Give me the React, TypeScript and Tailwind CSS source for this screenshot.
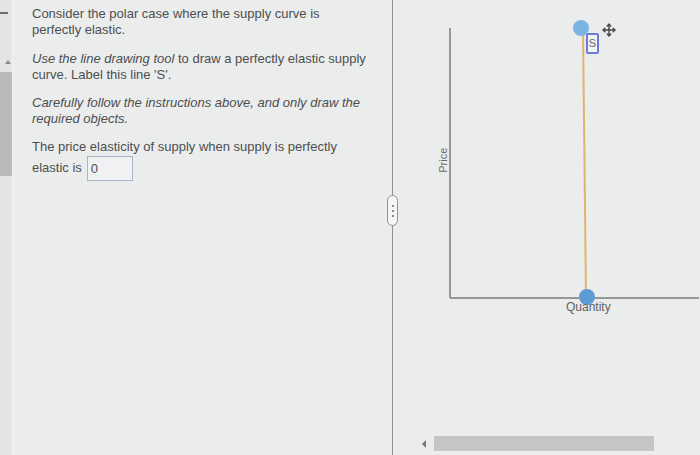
import { Move } from "lucide-react";

function LeftScrollbar() {
  return (
    <div className="relative w-[13px] shrink-0 bg-[#e2e4e5] border-r border-[#f3f4f4]">
      <div className="absolute left-0 top-[12px] h-[2px] w-[8px] bg-[#6b6d6e]" />
      <div className="absolute left-[5px] top-[60px] h-0 w-0 border-x-[3px] border-b-[4px] border-x-transparent border-b-[#8a8c8d]" />
      <div className="absolute left-0 top-[72px] h-[104px] w-[12px] bg-[#b8babb]" />
    </div>
  );
}

function Question() {
  return (
    <div className="w-[379px] shrink-0 pl-[19px] pt-[6px] text-[13px] leading-[15.5px] text-[#4d4f50] font-['Liberation_Sans',Arial,sans-serif]">
      <p>
        Consider the polar case where the supply curve is
        <br />
        perfectly elastic.
      </p>
      <p className="mt-[14px]">
        <i>Use the line drawing tool</i> to draw a perfectly elastic supply
        <br />
        curve. Label this line 'S'.
      </p>
      <p className="mt-[13px] italic">
        Carefully follow the instructions above, and only draw the
        <br />
        required objects.
      </p>
      <p className="mt-[13px]">The price elasticity of supply when supply is perfectly</p>
      <div className="mt-px flex items-center gap-[5px]">
        <span>elastic is</span>
        <div className="h-[25px] w-[46px] border border-[#a7b6c6] bg-[#eff1f2] pl-[3px] leading-[23px] text-[#4d4f50]">
          0
        </div>
      </div>
    </div>
  );
}

function Graph() {
  return (
    <div className="relative flex-1 font-['Liberation_Sans',Arial,sans-serif]">
      <svg className="absolute inset-0" width="306" height="455" viewBox="0 0 306 455">
        <line x1="57" y1="28" x2="57" y2="298" stroke="#7a7c7d" strokeWidth="1.5" />
        <line x1="57" y1="298" x2="306" y2="298" stroke="#7a7c7d" strokeWidth="1.5" />
        <line x1="190" y1="30" x2="193" y2="297" stroke="#e2b36e" strokeWidth="2" />
        <circle cx="188" cy="28" r="8" fill="#79b4e2" />
        <circle cx="194" cy="297" r="8" fill="#5d9bd6" />
      </svg>
      <div className="absolute left-[193px] top-[33px] flex h-[21px] w-[13px] items-center justify-center rounded-[2px] border-2 border-[#6c7bd6] bg-[#f3f4f6] text-[11px] text-[#666]">
        S
      </div>
      <Move className="absolute left-[209px] top-[23px] h-[14px] w-[14px] text-[#444]" strokeWidth={2.5} />
      <div className="absolute left-[38px] top-[152px] -rotate-90 text-[11px] text-[#6a6c6d]">Price</div>
      <div className="absolute left-[173px] top-[298px] text-[12px] text-[#5f6162]">Quantity</div>
      <div className="absolute left-[29px] top-[440px] h-0 w-0 border-y-[4px] border-r-[4px] border-y-transparent border-r-[#777]" />
      <div className="absolute left-[41px] top-[436px] h-[15px] w-[220px] bg-[#c3c5c6]" />
    </div>
  );
}

export default function App() {
  return (
    <div className="flex h-[455px] w-[700px] overflow-hidden bg-[#ebecec]">
      <LeftScrollbar />
      <Question />
      <div className="relative w-px shrink-0 bg-[#8f9192]">
        <div className="absolute left-[-5px] top-[195px] flex h-[31px] w-[11px] flex-col items-center justify-center gap-[3px] rounded-full border border-[#8f9192] bg-[#f4f5f5]">
          <span className="h-[2px] w-[2px] rounded-full bg-[#666]" />
          <span className="h-[2px] w-[2px] rounded-full bg-[#666]" />
          <span className="h-[2px] w-[2px] rounded-full bg-[#666]" />
        </div>
      </div>
      <Graph />
    </div>
  );
}
